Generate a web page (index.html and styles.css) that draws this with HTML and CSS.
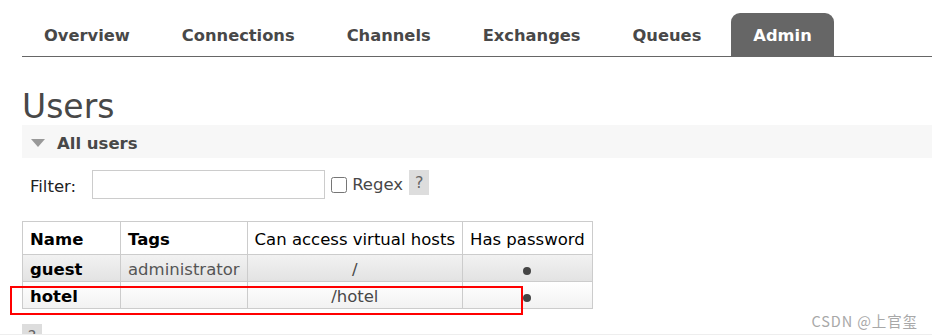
FILE: index.html
```html
<!DOCTYPE html>
<html lang="en">
<head>
    <meta charset="UTF-8">
    <title>RabbitMQ Management - Users</title>
    <link rel="stylesheet" href="styles.css">
</head>
<body>
    <div class="page">
        <ul class="tabs">
            <li><a href="#">Overview</a></li>
            <li><a href="#">Connections</a></li>
            <li><a href="#">Channels</a></li>
            <li><a href="#">Exchanges</a></li>
            <li><a href="#">Queues</a></li>
            <li class="selected"><a href="#">Admin</a></li>
        </ul>

        <h1 class="title">Users</h1>

        <div class="section-head">
            <span class="arrow"></span>
            <span>All users</span>
        </div>

        <div class="filter">
            <label for="filter">Filter:</label>
            <input id="filter" type="text" class="filter-input">
            <label class="regex"><input type="checkbox"> Regex</label>
            <span class="help">?</span>
        </div>

        <div class="table-wrap">
            <table class="users">
                <thead>
                    <tr>
                        <th class="strong">Name</th>
                        <th class="strong">Tags</th>
                        <th>Can access virtual hosts</th>
                        <th>Has password</th>
                    </tr>
                </thead>
                <tbody>
                    <tr class="alt1">
                        <td class="name">guest</td>
                        <td class="tags">administrator</td>
                        <td class="c">/</td>
                        <td class="c"><span class="dot"></span></td>
                    </tr>
                    <tr class="alt2">
                        <td class="name">hotel</td>
                        <td class="tags"></td>
                        <td class="c">/hotel</td>
                        <td class="c"><span class="dot"></span></td>
                    </tr>
                </tbody>
            </table>
            <div class="mark"></div>
        </div>
    </div>

    <div class="footer">
        <span class="help">?</span>
    </div>
    <div class="watermark">CSDN @上官玺</div>
</body>
</html>
```

FILE: styles.css
```css
body {
    margin: 0;
    background: #fff;
    color: #484848;
    font-family: 'DejaVu Sans', Verdana, sans-serif;
    overflow: hidden;
    height: 335px;
    position: relative;
}

.page {
    padding-left: 22px;
}

.tabs {
    list-style: none;
    margin: 13px 0 0;
    padding: 0;
    display: flex;
    gap: 8px;
    border-bottom: 1px solid #666;
}

.tabs a {
    display: block;
    height: 43px;
    line-height: 46px;
    padding: 0 22px;
    font-size: 16.3px;
    font-weight: bold;
    color: #484848;
    text-decoration: none;
    border-radius: 9px 9px 0 0;
}

.tabs .selected a {
    background: #666;
    color: #fff;
}

.title {
    margin: 32px 0 0;
    font-size: 33px;
    font-weight: normal;
    line-height: 36px;
    color: #484848;
}

.section-head {
    display: flex;
    align-items: center;
    gap: 12px;
    height: 30px;
    padding: 3px 0 0 9px;
    background: #f7f7f7;
    font-size: 16.5px;
    font-weight: bold;
}

.arrow {
    width: 0;
    height: 0;
    border-left: 7px solid transparent;
    border-right: 7px solid transparent;
    border-top: 8px solid #999;
}

.filter {
    display: flex;
    align-items: center;
    height: 29px;
    margin-top: 12px;
    padding-left: 8px;
    font-size: 16.5px;
    color: #222;
}

.filter label[for] {
    padding-top: 3px;
}

.filter-input {
    width: 231px;
    height: 27px;
    margin: 0 6px 0 16px;
    padding: 0;
    border: 1px solid #ccc;
}

.regex {
    display: flex;
    align-items: center;
    gap: 5px;
    color: #484848;
}

.regex input {
    margin: 0;
    width: 16px;
    height: 16px;
}

.help {
    display: inline-block;
    width: 20px;
    height: 25px;
    line-height: 25px;
    margin-left: 6px;
    text-align: center;
    background: #ddd;
    color: #666;
    font-size: 16px;
}

.filter .help {
    align-self: flex-start;
}

.table-wrap {
    position: relative;
    margin-top: 22px;
}

.users {
    border-collapse: collapse;
    border: 1px solid #ccc;
    font-size: 16.5px;
}

.users th,
.users td {
    border: 1px solid #ccc;
    padding: 3px 7px 0;
    white-space: nowrap;
}

.users th {
    height: 29px;
    font-weight: normal;
    color: #000;
    text-align: left;
    background: #fff;
}

.users th.strong {
    font-weight: bold;
}

.users th:nth-child(1) { width: 83px; }
.users th:nth-child(2) { width: 111px; }

.users td {
    height: 23px;
}

.users .name {
    font-weight: bold;
    color: #000;
}

.users .tags {
    color: #555;
}

.users .c {
    text-align: center;
    color: #484848;
}

.dot {
    display: inline-block;
    width: 8px;
    height: 8px;
    border-radius: 50%;
    background: #444;
    vertical-align: middle;
}

.alt1 {
    background: linear-gradient(#f2f2f2, #e2e2e2);
}

.alt2 {
    background: linear-gradient(#fff, #f1f1f1);
}

/* annotation box drawn over the table */
.mark {
    position: absolute;
    left: -12px;
    top: 65px;
    width: 509px;
    height: 25px;
    border: 2px solid #f00;
}

.footer {
    margin-top: 15px;
    height: 10px;
    padding-left: 22px;
    overflow: hidden;
    border-bottom: 2px solid #eee;
}

.footer .help {
    margin-left: 0;
}

.watermark {
    position: absolute;
    right: 14px;
    top: 310px;
    font-family: 'Noto Sans CJK SC', sans-serif;
    font-size: 14.5px;
    letter-spacing: 0.9px;
    color: #a8a8a8;
}
```
